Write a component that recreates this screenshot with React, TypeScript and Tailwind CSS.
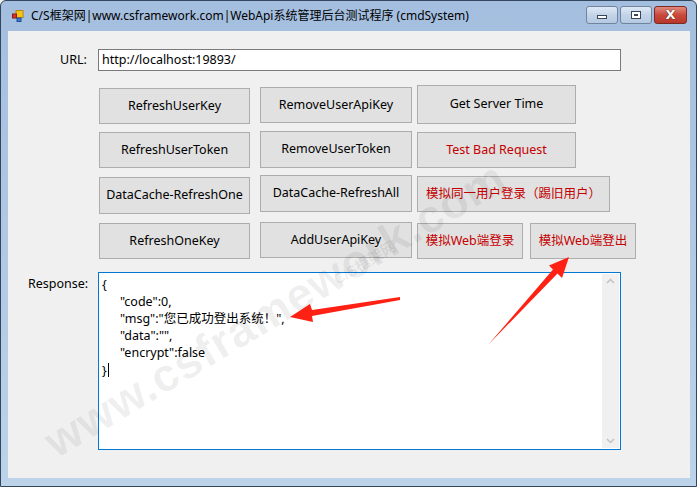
import React from "react";

const uiFont = { fontFamily: '"Noto Sans", "Noto Sans CJK SC", sans-serif' };

type Btn = { label: string; w: string; mt: string; h: string; red?: boolean };

const rows: { top: string; h: string; buttons: Btn[] }[] = [
  {
    top: "mt-[14px]",
    h: "h-[39px]",
    buttons: [
      { label: "RefreshUserKey", w: "w-[151px]", mt: "mt-[3px]", h: "h-[36px]" },
      { label: "RemoveUserApiKey", w: "w-[152px] ml-[10px]", mt: "mt-[2px]", h: "h-[36px]" },
      { label: "Get Server Time", w: "w-[159px] ml-[5px]", mt: "mt-0", h: "h-[39px]" },
    ],
  },
  {
    top: "mt-[7px]",
    h: "h-[37px]",
    buttons: [
      { label: "RefreshUserToken", w: "w-[151px]", mt: "mt-[1px]", h: "h-[36px]" },
      { label: "RemoveUserToken", w: "w-[152px] ml-[10px]", mt: "mt-0", h: "h-[37px]" },
      { label: "Test Bad Request", w: "w-[159px] ml-[5px]", mt: "mt-[1px]", h: "h-[36px]", red: true },
    ],
  },
  {
    top: "mt-[7px]",
    h: "h-[39px]",
    buttons: [
      { label: "DataCache-RefreshOne", w: "w-[151px]", mt: "mt-[2px]", h: "h-[37px]" },
      { label: "DataCache-RefreshAll", w: "w-[152px] ml-[10px]", mt: "mt-0", h: "h-[37px]" },
      { label: "模拟同一用户登录（踢旧用户）", w: "w-[193px] ml-[5px]", mt: "mt-[1px]", h: "h-[36px]", red: true },
    ],
  },
  {
    top: "mt-[8px]",
    h: "h-[37px]",
    buttons: [
      { label: "RefreshOneKey", w: "w-[151px]", mt: "mt-[1px]", h: "h-[36px]" },
      { label: "AddUserApiKey", w: "w-[152px] ml-[10px]", mt: "mt-0", h: "h-[36px]" },
      { label: "模拟Web端登录", w: "w-[106px] ml-[5px]", mt: "mt-[1px]", h: "h-[36px]", red: true },
      { label: "模拟Web端登出", w: "w-[106px] ml-[7px]", mt: "mt-[1px]", h: "h-[36px]", red: true },
    ],
  },
];

const responseLines = [
  { indent: false, text: "{" },
  { indent: true, text: '"code":0,' },
  { indent: true, text: '"msg":"您已成功登出系统！",' },
  { indent: true, text: '"data":"",' },
  { indent: true, text: '"encrypt":false' },
  { indent: false, text: "}" },
];

function AppIcon() {
  return (
    <svg width="12" height="12" viewBox="0 0 12 12">
      <rect x="4" y="0.5" width="7" height="7" fill="#f5c518" stroke="#b8860b" />
      <rect x="0.5" y="4" width="4" height="4" fill="#d8322a" stroke="#8b1a14" />
      <rect x="5" y="8" width="4" height="3.5" fill="#3b7bd8" stroke="#1f4f99" />
    </svg>
  );
}

function CaptionButton({ kind }: { kind: "min" | "max" | "close" }) {
  if (kind === "close") {
    return (
      <div className="flex h-[18px] w-[33px] items-center justify-center rounded-[3px] border border-[#7a2a22] bg-gradient-to-b from-[#e08a7f] via-[#c9493a] to-[#b8372b]">
        <span className="text-[13px] font-black leading-none text-white [text-shadow:0_0_1px_#4a1a14,0_0_1px_#4a1a14]" style={{ fontFamily: '"DejaVu Sans", sans-serif' }}>
          X
        </span>
      </div>
    );
  }
  return (
    <div className="flex h-[18px] w-[32px] items-center justify-center rounded-[3px] border border-[#6f849f] bg-gradient-to-b from-[#dfe9f5] via-[#c3d4e8] to-[#b5c9e1]">
      {kind === "min" ? (
        <div className="mt-[4px] h-[4px] w-[10px] border border-[#39465a] bg-white" />
      ) : (
        <div className="flex h-[8px] w-[10px] items-center justify-center border border-[#39465a] bg-white">
          <div className="h-[2px] w-[4px] border border-[#39465a]" />
        </div>
      )}
    </div>
  );
}

export default function App() {
  return (
    <div className="relative h-[487px] w-[697px] overflow-hidden bg-[#f0f0f0]" style={uiFont}>
      <div className="flex h-full w-full flex-col rounded-t-[6px] border border-[#33465c] bg-gradient-to-b from-[#a4bedf] to-[#bcd3ea]">
        <div className="flex h-[30px] shrink-0 items-center pl-[11px] pr-[9px]">
          <AppIcon />
          <span className="ml-[7px] text-[12px] text-black">C/S框架网|www.csframework.com|WebApi系统管理后台测试程序 (cmdSystem)</span>
          <div className="ml-auto mt-[-3px] flex gap-[2px]">
            <CaptionButton kind="min" />
            <CaptionButton kind="max" />
            <CaptionButton kind="close" />
          </div>
        </div>

        <div className="mx-[6px] mb-[8px] ml-[7px] flex flex-1 flex-col bg-[#f0f0f0] text-[12.5px] text-black">
          <div className="mt-[18px] flex items-center">
            <span className="ml-[52px] w-[38px]">URL:</span>
            <div className="flex h-[22px] w-[523px] items-center border border-[#7a7a7a] bg-white px-[3px]">
              http://localhost:19893/
            </div>
          </div>

          {rows.map((row, i) => (
            <div key={i} className={"ml-[91px] flex items-start " + row.top + " " + row.h}>
              {row.buttons.map((b) => (
                <div
                  key={b.label}
                  className={
                    "flex shrink-0 items-center justify-center border border-[#adadad] bg-[#e1e1e1] whitespace-nowrap " +
                    b.w + " " + b.mt + " " + b.h + " " +
                    (b.red ? "text-[#c40000]" : "text-black")
                  }
                >
                  {b.label}
                </div>
              ))}
            </div>
          ))}

          <div className="mt-[13px] flex items-start">
            <span className="ml-[20px] mt-[3px] w-[70px]">Response:</span>
            <div className="flex h-[178px] w-[523px] border border-[#0078d7] bg-white">
              <div className="flex-1 pl-[3px] pt-[3px] leading-[17px]">
                {responseLines.map((l, i) => (
                  <div key={i} className={l.indent ? "pl-[18px]" : ""}>
                    {l.text}
                    {i === responseLines.length - 1 ? <span className="ml-[1px] inline-block h-[14px] w-px translate-y-[2px] bg-black" /> : null}
                  </div>
                ))}
              </div>
              <div className="my-px mr-px flex w-[17px] flex-col items-center justify-between bg-[#f0f0f0] py-[4px]">
                <svg width="9" height="6" viewBox="0 0 9 6">
                  <path d="M1 5 L4.5 1.5 L8 5" fill="none" stroke="#c2c2c2" strokeWidth="1.5" />
                </svg>
                <svg width="9" height="6" viewBox="0 0 9 6">
                  <path d="M1 1 L4.5 4.5 L8 1" fill="none" stroke="#c2c2c2" strokeWidth="1.5" />
                </svg>
              </div>
            </div>
          </div>
        </div>
      </div>

      {/* watermark */}
      <div className="pointer-events-none absolute left-[5px] top-[275px] w-[540px] -rotate-[31deg] text-center text-[46px] font-bold tracking-[1px] text-black/[0.07]" style={{ fontFamily: '"Liberation Sans", sans-serif' }}>
        www.csframework.com
      </div>
      <div className="pointer-events-none absolute left-[330px] top-[252px] -rotate-[31deg] text-[15px] font-bold text-black/[0.08]" style={{ fontFamily: '"Liberation Sans", "Noto Sans CJK SC", sans-serif' }}>
        C/S框架网
      </div>

      {/* annotation arrows */}
      <svg className="pointer-events-none absolute left-0 top-0" width="697" height="487" viewBox="0 0 697 487">
        <polygon points="400,297 312,310 310,304 290,317 313,322 312,316 400,300" fill="#ff2214" />
        <polygon points="488,345 553,269.5 549,265.5 569,257 562,278 557.5,273.5" fill="#ff2214" />
      </svg>
    </div>
  );
}
